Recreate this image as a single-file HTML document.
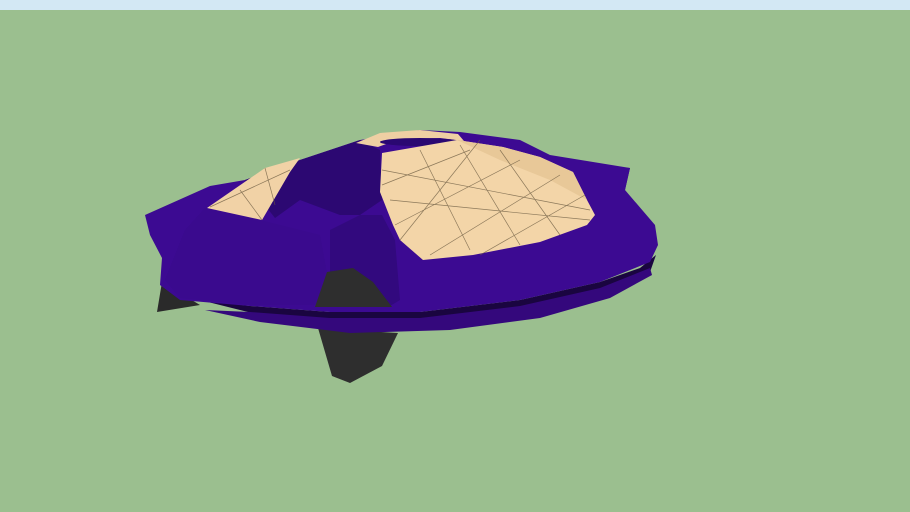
<!DOCTYPE html>
<html><head><meta charset="utf-8"><style>
html,body{margin:0;padding:0;width:910px;height:512px;overflow:hidden;background:#9bbf8f}
.top{position:absolute;left:0;top:0;width:910px;height:10px;background:#d3e8f4}
svg{position:absolute;left:0;top:0}
</style></head><body>
<div class="top"></div>
<svg width="910" height="512" viewBox="0 0 910 512">
<polygon points="318,328 398,333 382,366 350,383 332,376" fill="#2e2e2e"/>
<polygon points="200,300 260,315 350,325 450,322 540,310 610,292 650,272 656,255 640,268 600,282 520,300 420,312 330,312 250,306" fill="#1a0540"/>
<polygon points="205,310 260,322 350,333 450,330 540,318 610,298 652,275 650,268 600,288 520,306 420,318 330,318 250,312" fill="#34087c"/>
<polygon points="157,312 162,282 175,290 200,305" fill="#2a2a2a"/>
<polygon points="145,215 210,186 245,180 300,160 360,140 420,130 460,132 520,140 550,155 630,168 625,190 655,225 658,245 650,262 600,282 520,300 420,312 330,312 250,306 180,300 160,285 162,258 150,235" fill="#3c0a92"/>
<polygon points="245,180 300,160 360,140 380,150 382,200 360,215 340,215 300,200 275,218" fill="#2c0872"/>
<polygon points="330,230 360,215 382,215 395,240 400,300 390,306 330,300" fill="#32097e"/>
<polygon points="185,230 205,208 260,220 320,235 330,290 315,305 250,305 180,298 165,280" fill="#3a0a8e"/>
<polygon points="207,208 265,168 300,158 290,172 262,220" fill="#f1d2a6"/>
<polygon points="356,143 380,133 420,130 458,134 464,141 440,138 400,139 378,147" fill="#efcfa3"/>
<ellipse cx="420" cy="142" rx="40" ry="4" fill="#2a0872"/>
<polygon points="382,153 457,140 503,147 540,157 573,172 587,200 595,215 587,225 540,242 473,255 423,260 400,240 393,225 380,192" fill="#f3d5a8"/>
<polygon points="457,140 503,147 540,157 573,172 587,200 550,180 500,160" fill="#e8c898"/>
<g stroke="#6a5a40" stroke-width="0.7" fill="none" opacity="0.75">
<path d="M382,170 L590,210 M390,200 L590,220 M420,150 L470,250 M460,145 L520,245 M500,150 L560,235 M382,185 L470,150 M395,225 L520,160 M430,255 L560,175 M480,255 L585,195 M400,240 L480,140"/>
<path d="M210,207 L290,170 M240,190 L262,220 M265,168 L275,205"/>
</g>
<polygon points="327,272 353,268 373,282 392,307 315,307" fill="#2e2e2e"/>
<polygon points="590,165 630,168 625,190 600,180" fill="#3c0a92"/>
</svg>
</body></html>
